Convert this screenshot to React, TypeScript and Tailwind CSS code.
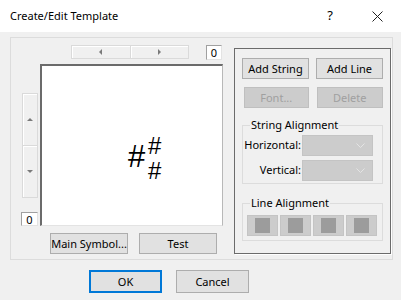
import React from "react";

const font = { fontFamily: '"Noto Sans", "Open Sans", sans-serif' };
const hashFont = { fontFamily: '"Liberation Sans", Arial, sans-serif' };

const Btn = ({
  label,
  className = "",
  disabled = false,
}: {
  label: string;
  className?: string;
  disabled?: boolean;
}) => (
  <div
    className={`flex items-center justify-center whitespace-nowrap text-[11px] leading-none ${
      disabled
        ? "bg-[#cccccc] border border-[#bfbfbf] text-[#a0a0a0]"
        : "bg-[#e1e1e1] border border-[#adadad] text-black"
    } ${className}`}
  >
    {label}
  </div>
);

const Arrow = ({ dir }: { dir: "left" | "right" | "up" | "down" }) => {
  const pts = {
    left: "3,0 0,3 3,6",
    right: "0,0 3,3 0,6",
    up: "0,3 3,0 6,3",
    down: "0,0 3,3 6,0",
  }[dir];
  const w = dir === "left" || dir === "right" ? 3 : 6;
  const h = dir === "left" || dir === "right" ? 6 : 3;
  return (
    <svg width={w} height={h} viewBox={`0 0 ${w} ${h}`}>
      <polygon points={pts} fill="#7a7a7a" />
    </svg>
  );
};

const ZeroBox = ({ className = "" }: { className?: string }) => (
  <div
    className={`bg-white border-t border-l border-[#a0a0a0] border-r border-b border-r-[#e3e3e3] border-b-[#e3e3e3] flex items-center justify-center text-[11px] leading-none ${className}`}
  >
    0
  </div>
);

const Combo = () => (
  <div className="w-[71px] h-[21px] bg-[#cccccc] border border-[#c4c4c4] flex items-center justify-end pr-[7px]">
    <svg width="9" height="5" viewBox="0 0 9 5">
      <polyline points="0.5,0.5 4.5,4.5 8.5,0.5" fill="none" stroke="#e4e4e4" strokeWidth="1" />
    </svg>
  </div>
);

export default function App() {
  return (
    <div className="w-[401px] h-[300px] bg-[#f0f0f0] flex flex-col text-black" style={font}>
      {/* title bar */}
      <div className="h-[32px] bg-white flex items-center pl-[10px] shrink-0">
        <span className="text-[11px] whitespace-nowrap">Create/Edit Template</span>
        <span className="ml-auto mr-[39px] text-[13px]">?</span>
        <svg className="mr-[18px]" width="11" height="11" viewBox="0 0 11 11">
          <path d="M0.5 0.5 L10.5 10.5 M10.5 0.5 L0.5 10.5" stroke="#222" strokeWidth="1" />
        </svg>
      </div>

      {/* main group */}
      <div className="mt-[5px] mx-[10px] w-[383px] h-[223px] border border-[#dcdcdc] flex shrink-0">
        {/* left side */}
        <div className="w-[212px] flex flex-col pt-[7px]">
          <div className="flex h-[14px]">
            <div className="ml-[60px] w-[118px] h-[14px] border border-[#dadada] flex">
              <div className="flex-1 border-r border-[#dadada] flex items-center justify-center shadow-[inset_1px_1px_0_#fff]">
                <Arrow dir="left" />
              </div>
              <div className="flex-1 flex items-center justify-center shadow-[inset_1px_1px_0_#fff]">
                <Arrow dir="right" />
              </div>
            </div>
            <ZeroBox className="ml-[17px] w-[16px] h-[15px]" />
          </div>
          <div className="flex mt-[5px]">
            <div className="w-[29px] flex flex-col items-end pr-[2px]">
              <div className="mt-[29px] w-[16px] h-[105px] border border-[#dadada] flex flex-col">
                <div className="flex-1 border-b border-[#dadada] flex items-center justify-center shadow-[inset_1px_1px_0_#fff]">
                  <Arrow dir="up" />
                </div>
                <div className="flex-1 flex items-center justify-center shadow-[inset_1px_1px_0_#fff]">
                  <Arrow dir="down" />
                </div>
              </div>
              <ZeroBox className="mt-[14px] w-[17px] h-[14px]" />
            </div>
            <div className="relative w-[183px] h-[162px] bg-white border-t-2 border-l-2 border-[#6b6b6b] border-r border-b border-r-[#b8b8b8] border-b-[#e3e3e3]">
              <span className="absolute left-[86px] top-[75px] text-[31px] leading-none" style={hashFont}>
                #
              </span>
              <span className="absolute left-[106px] top-[68px] text-[24px] leading-none" style={hashFont}>
                #
              </span>
              <span className="absolute left-[106px] top-[93px] text-[24px] leading-none" style={hashFont}>
                #
              </span>
            </div>
          </div>
          <div className="flex mt-[7px]">
            <Btn label="Main Symbol..." className="ml-[39px] w-[78px] h-[21px]" />
            <Btn label="Test" className="ml-[11px] w-[78px] h-[21px]" />
          </div>
        </div>

        {/* right panel */}
        <div className="ml-[11px] mt-[10px] w-[157px] h-[206px] border border-[#6b6b6b] shadow-[1px_1px_0_#fff] flex flex-col px-[7px] pt-[9px]">
          <div className="flex gap-[7px]">
            <Btn label="Add String" className="w-[67px] h-[21px]" />
            <Btn label="Add Line" className="w-[67px] h-[21px]" />
          </div>
          <div className="flex mt-[8px]">
            <Btn label="Font..." disabled className="ml-[2px] w-[65px] h-[21px]" />
            <Btn label="Delete" disabled className="ml-[8px] w-[67px] h-[21px]" />
          </div>
          {/* String Alignment */}
          <div className="mt-[17px] w-[141px] h-[59px] border border-[#dcdcdc] relative flex flex-col pt-[9px]">
            <span className="absolute -top-[9px] left-[7px] bg-[#f0f0f0] px-[1px] text-[11px] leading-[16px] whitespace-nowrap">
              String Alignment
            </span>
            <div className="flex items-center">
              <span className="w-[59px] text-right pr-[1px] text-[11px] whitespace-nowrap">Horizontal:</span>
              <Combo />
            </div>
            <div className="flex items-center mt-[4px]">
              <span className="w-[59px] text-right pr-[1px] text-[11px] whitespace-nowrap">Vertical:</span>
              <Combo />
            </div>
          </div>
          {/* Line Alignment */}
          <div className="mt-[19px] w-[141px] h-[38px] border border-[#dcdcdc] relative flex gap-[2px] pl-[4px] pt-[11px]">
            <span className="absolute -top-[9px] left-[7px] bg-[#f0f0f0] px-[1px] text-[11px] leading-[16px] whitespace-nowrap">
              Line Alignment
            </span>
            {[0, 1, 2, 3].map((i) => (
              <div
                key={i}
                className="w-[31px] h-[21px] bg-[#cccccc] border border-[#c4c4c4] flex items-center justify-center"
              >
                <div className="w-[15px] h-[15px] bg-[#9c9c9c]" />
              </div>
            ))}
          </div>
        </div>
      </div>

      {/* bottom buttons */}
      <div className="flex mt-[10px]">
        <div className="ml-[89px] w-[73px] h-[23px] bg-[#e1e1e1] border-2 border-[#0078d7] flex items-center justify-center text-[11px] leading-none">
          OK
        </div>
        <Btn label="Cancel" className="ml-[14px] w-[73px] h-[23px]" />
      </div>
    </div>
  );
}
